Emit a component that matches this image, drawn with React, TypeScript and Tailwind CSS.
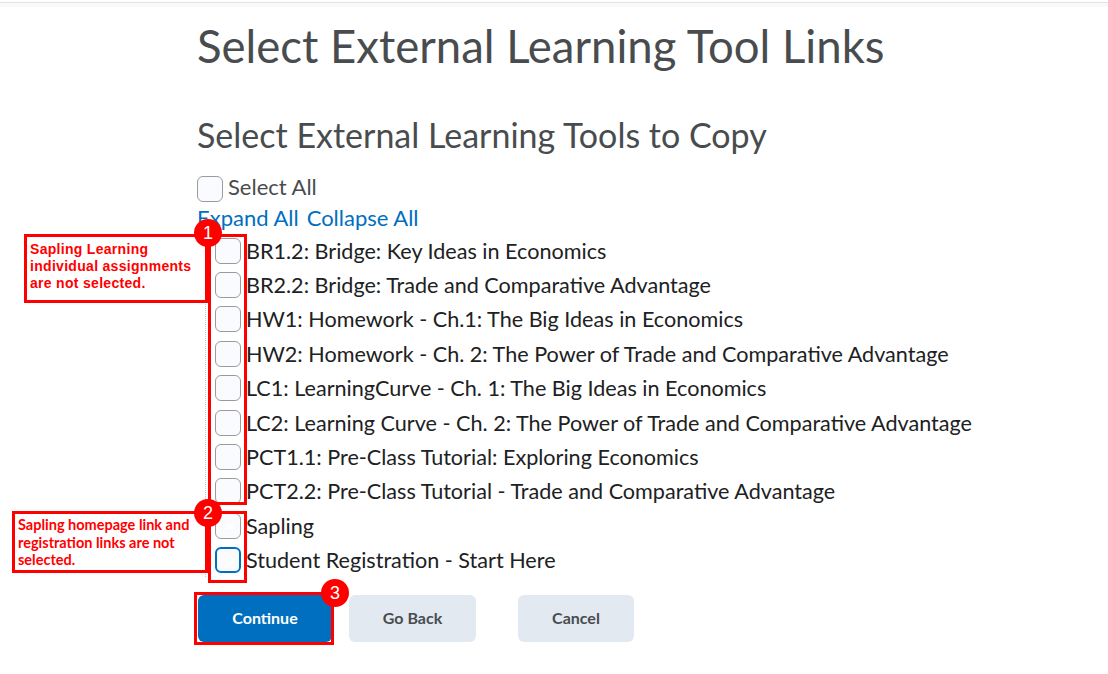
import React from "react";

const items = [
  "BR1.2: Bridge: Key Ideas in Economics",
  "BR2.2: Bridge: Trade and Comparative Advantage",
  "HW1: Homework - Ch.1: The Big Ideas in Economics",
  "HW2: Homework - Ch. 2: The Power of Trade and Comparative Advantage",
  "LC1: LearningCurve - Ch. 1: The Big Ideas in Economics",
  "LC2: Learning Curve - Ch. 2: The Power of Trade and Comparative Advantage",
  "PCT1.1: Pre-Class Tutorial: Exploring Economics",
  "PCT2.2: Pre-Class Tutorial - Trade and Comparative Advantage",
  "Sapling",
  "Student Registration - Start Here",
];

function Box({ focus, dot }: { focus?: boolean; dot?: boolean }) {
  return (
    <div
      className={
        focus
          ? "relative h-[26px] w-[26px] shrink-0 rounded-[6px] border-2 border-[#006fbf] bg-[#f9fbff]"
          : "relative h-[26px] w-[26px] shrink-0 rounded-[6px] border border-[#9a9b9c] bg-[#f9fbff]"
      }
    >
      {dot && <div className="absolute left-[11px] top-[10px] h-[5px] w-[6px] bg-white" />}
    </div>
  );
}

function Badge({ n, cls }: { n: string; cls: string }) {
  return (
    <div
      className={
        "absolute flex h-[28px] w-[28px] items-center justify-center rounded-full bg-[#ff0000] text-[18px] leading-none text-white " +
        cls
      }
      style={{ fontFamily: '"Liberation Sans", Arial, sans-serif' }}
    >
      {n}
    </div>
  );
}

export default function App() {
  return (
    <div
      className="relative h-[674px] w-[1108px] overflow-hidden bg-white"
      style={{ fontFamily: 'Lato, "Noto Sans", sans-serif' }}
    >
      <div className="h-[2px] bg-white" />
      <div className="h-px bg-[#e3e3e3]" />
      <div className="h-[4px] bg-[#f9f9f9]" />

      <div className="pl-[197px]">
        <h1 className="mt-[11px] text-[45.5px] leading-[55px] font-normal text-[#494c4e]">
          Select External Learning Tool Links
        </h1>
        <h2 className="mt-[40px] text-[34px] leading-[43px] font-normal text-[#494c4e]">
          Select External Learning Tools to Copy
        </h2>

        <div className="mt-[19.5px] flex h-[26px] items-center gap-[5px]">
          <Box />
          <span className="-mt-[3px] text-[22px] leading-[26px] text-[#494c4e]">Select All</span>
        </div>

        <div className="mt-[3px] flex gap-[8px] text-[22px] leading-[26px] text-[#006fbf]">
          <span>Expand All</span>
          <span>Collapse All</span>
        </div>

        <div className="ml-[8px] mt-[3px] border-l border-dotted border-[#c8c8c8]">
          {items.map((t, i) => (
            <div key={t} className="flex h-[34.4px] items-center gap-[5px] pl-[9px]">
              <Box focus={i === 9} dot={i >= 8} />
              <span className="whitespace-nowrap text-[21.6px] leading-[26px] text-[#202122]">{t}</span>
            </div>
          ))}
        </div>

        <div className="ml-[1px] mt-[17.5px] flex items-center">
          <button className="h-[47px] w-[134px] rounded-[6px] bg-[#006fbf] text-[16px] font-bold text-white">
            Continue
          </button>
          <button className="ml-[17px] h-[47px] w-[127px] rounded-[6px] bg-[#e3e9f1] text-[16px] font-bold text-[#494c4e]">
            Go Back
          </button>
          <button className="ml-[42px] h-[47px] w-[116px] rounded-[6px] bg-[#e3e9f1] text-[16px] font-bold text-[#494c4e]">
            Cancel
          </button>
        </div>
      </div>

      {/* Annotation 1 */}
      <div
        className="absolute left-[24px] top-[234px] h-[69px] w-[184px] border-[3px] border-[#ff0000] bg-white pl-[3px] pt-[4px] text-[14px] font-bold leading-[17px] tracking-[0.3px] text-[#ff0000]"
        style={{ fontFamily: '"Liberation Sans", Arial, sans-serif' }}
      >
        Sapling Learning
        <br />
        individual assignments
        <br />
        are not selected.
      </div>
      <div className="absolute left-[208px] top-[234px] h-[271px] w-[39px] border-[3px] border-[#ff0000]" />
      <Badge n="1" cls="left-[194px] top-[219px]" />

      {/* Annotation 2 */}
      <div className="absolute left-[12px] top-[511px] h-[62px] w-[196px] border-[3px] border-[#ff0000] bg-white pl-[3px] pt-[2px] text-[14.5px] font-bold leading-[17.5px] text-[#ff0000]">
        Sapling homepage link and
        <br />
        registration links are not
        <br />
        selected.
      </div>
      <div className="absolute left-[208px] top-[511px] h-[72px] w-[39px] border-[3px] border-[#ff0000]" />
      <Badge n="2" cls="left-[194px] top-[499px]" />

      {/* Annotation 3 */}
      <div className="absolute left-[194px] top-[592px] h-[53px] w-[140px] border-[3px] border-[#ff0000]" />
      <Badge n="3" cls="left-[321px] top-[579px]" />
    </div>
  );
}
